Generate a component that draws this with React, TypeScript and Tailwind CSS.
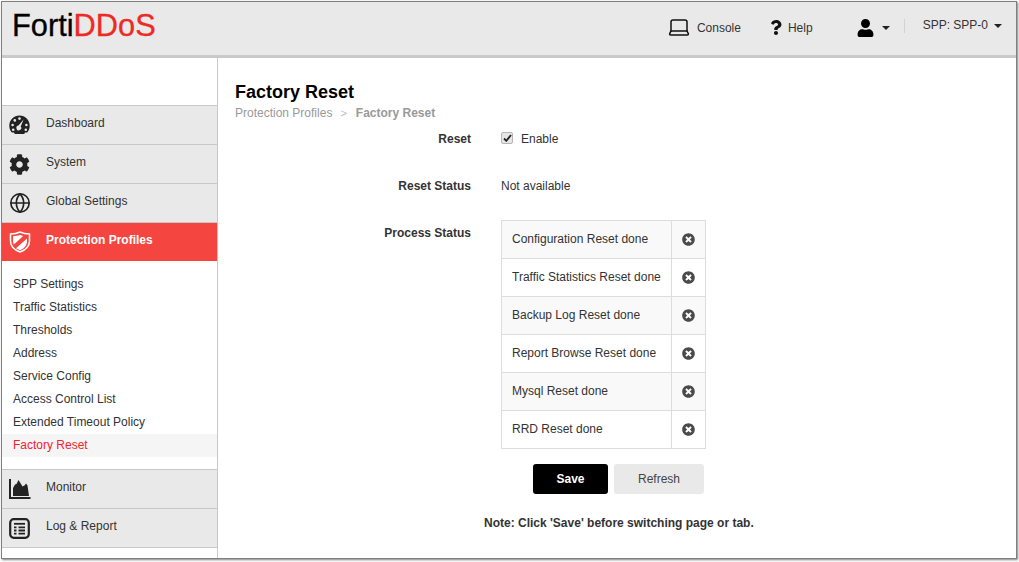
import { FaCog, FaQuestion, FaTimesCircle, FaUser } from 'react-icons/fa';
import { Globe, Laptop } from 'lucide-react';

const subItems = [
    'SPP Settings',
    'Traffic Statistics',
    'Thresholds',
    'Address',
    'Service Config',
    'Access Control List',
    'Extended Timeout Policy',
];

const processRows = [
    'Configuration Reset done',
    'Traffic Statistics Reset done',
    'Backup Log Reset done',
    'Report Browse Reset done',
    'Mysql Reset done',
    'RRD Reset done',
];

function Caret() {
    return <span className="inline-block w-0 h-0 border-x-[4px] border-x-transparent border-t-[4px] border-t-[#222]" />;
}

function GaugeIcon() {
    return (
        <svg width="21" height="20" viewBox="0 0 21 20">
            <path d="M10.500 0.500 C4.800 0.500 0.300 5 0.300 10.700 C0.300 13.300 1.200 15.600 2.800 17.400 L5 17.400 L5.800 19 L15.200 19 L16 17.400 L18.200 17.400 C19.800 15.600 20.700 13.300 20.700 10.700 C20.700 5 16.200 0.500 10.500 0.500 Z" fill="#222" />
            <g fill="#e9e9e9">
                <circle cx="10.500" cy="3.600" r="1.300" />
                <circle cx="5.800" cy="5.400" r="1.300" />
                <circle cx="3.600" cy="10" r="1.300" />
                <circle cx="4.200" cy="14.700" r="1.300" />
                <circle cx="17.400" cy="10" r="1.300" />
                <circle cx="16.800" cy="14.700" r="1.300" />
            </g>
            <path d="M14.700 4.300 L11.700 11.500 A2.400 2.400 0 1 1 9.500 10.600 Z" fill="#e9e9e9" />
        </svg>
    );
}

function ShieldIcon() {
    return (
        <svg width="22" height="22" viewBox="0 0 22 22">
            <path d="M11 1 C8 2.500 5 3 1.500 3 V10 C1.500 15 5.500 19 11 21 C16.500 19 20.500 15 20.500 10 V3 C17 3 14 2.500 11 1 Z" fill="none" stroke="#fff" strokeWidth="1.500" />
            <path d="M11 3.800 C8.800 4.800 6.800 5.200 4 5.300 V10 C4 11.300 4.300 12.400 4.900 13.500 L14.200 5 C13.100 4.700 12.100 4.300 11 3.800 Z" fill="#fff" />
            <path d="M18 7.500 L7 17.200 C8.200 18 9.500 18.700 11 19.200 C15 17.600 18 14.500 18 10 Z" fill="#fff" />
        </svg>
    );
}

function AreaIcon() {
    return (
        <svg width="22" height="20" viewBox="0 0 22 20">
            <path d="M1 0 V19 H21.500" fill="none" stroke="#222" strokeWidth="2" />
            <path d="M4 17 V9 L6 5.500 L7.500 5 L9.500 1 L12 5 L13.500 7.500 L15.500 6.500 L17 4.500 L18.500 6.500 L20 17 Z" fill="#222" />
        </svg>
    );
}

function ListIcon() {
    return (
        <svg width="21" height="21" viewBox="0 0 21 21">
            <rect x="1.200" y="1.200" width="18.600" height="18.600" rx="3.500" fill="none" stroke="#222" strokeWidth="2.200" />
            <path d="M5 5.800 H16" stroke="#222" strokeWidth="1.800" />
            <path d="M5 9.300 H7.500 M9.500 9.300 H16 M5 12.500 H7.500 M9.500 12.500 H16 M5 15.700 H7.500 M9.500 15.700 H16" stroke="#222" strokeWidth="1.800" />
        </svg>
    );
}

function NavItem({ icon, label, active }: { icon: React.ReactNode; label: string; active?: boolean }) {
    return (
        <div className={`flex h-[39px] items-center border-t border-[#c8c8c8] ${active ? 'bg-[#f44540] text-white font-bold' : 'bg-[#e9e9e9] text-[#333]'}`}>
            <div className="w-[44px] pl-[7px] flex items-center shrink-0">{icon}</div>
            <span className="-mt-[5px]">{label}</span>
        </div>
    );
}

export default function App() {
    return (
        <div className="w-[1019px] h-[562px] bg-white overflow-hidden pt-px pl-px font-['Liberation_Sans',Arial,sans-serif] text-[12px] text-[#333]">
            <div className="w-[1016px] h-[558px] border border-[#7f7f7f] shadow-[1px_1px_2px_rgba(0,0,0,0.5)] flex flex-col overflow-hidden">
                {/* Header */}
                <header className="h-[56px] shrink-0 bg-[#e9e9e9] border-b-[3px] border-[#c9c9c9] flex items-center">
                    <div className="ml-[10px] -mt-[4px] text-[30.800px] leading-none text-black [-webkit-text-stroke:0.3px]">
                        Forti<span className="text-[#ee2a24]">DDoS</span>
                    </div>
                    <div className="ml-auto flex items-center -mt-[1px]">
                        <Laptop className="w-[24px] h-[24px] text-[#111] -mt-[3px]" strokeWidth={1.500} />
                        <span className="ml-[6px]">Console</span>
                        <FaQuestion className="ml-[29px] w-[12px] h-[15px] text-[#111] -mt-[1px]" />
                        <span className="ml-[6px]">Help</span>
                        <FaUser className="ml-[44px] w-[17px] h-[18px] text-black -mt-[1px]" />
                        <span className="ml-[8px] flex"><Caret /></span>
                        <div className="ml-[14px] w-px h-[14px] bg-[#d2d2d2] -mt-[4px]" />
                        <span className="ml-[18px] -mt-[6px]">SPP: SPP-0</span>
                        <span className="ml-[6px] mr-[14px] -mt-[5px] flex"><Caret /></span>
                    </div>
                </header>

                <div className="flex-1 flex min-h-0">
                    {/* Sidebar */}
                    <aside className="w-[216px] shrink-0 border-r border-[#c8c8c8] flex flex-col">
                        <div className="h-[47px] shrink-0" />
                        <NavItem icon={<GaugeIcon />} label="Dashboard" />
                        <NavItem icon={<FaCog className="w-[21px] h-[21px] text-[#222]" />} label="System" />
                        <NavItem icon={<Globe className="w-[22px] h-[22px] text-[#222]" strokeWidth={1.800} />} label="Global Settings" />
                        <NavItem icon={<ShieldIcon />} label="Protection Profiles" active />
                        <ul className="pt-[11px] pb-[12px] shrink-0">
                            {subItems.map((item) => (
                                <li key={item} className="h-[23px] pl-[11px] flex items-center">{item}</li>
                            ))}
                            <li className="h-[23px] mt-px pb-[2px] pl-[11px] flex items-center bg-[#f5f5f5] text-[#f5222d]">Factory Reset</li>
                        </ul>
                        <NavItem icon={<AreaIcon />} label="Monitor" />
                        <NavItem icon={<ListIcon />} label="Log & Report" />
                        <div className="border-t border-[#c8c8c8]" />
                    </aside>

                    {/* Main */}
                    <main className="flex-1 pl-[17px] pt-[23px]">
                        <h1 className="text-[18px] leading-[22px] font-bold text-black">Factory Reset</h1>
                        <div className="flex items-center h-[16px] mt-[2px] text-[#999]">
                            <span>Protection Profiles</span>
                            <span className="ml-[8px] mr-[9px] text-[#bbb] text-[11px]">&gt;</span>
                            <span className="font-bold">Factory Reset</span>
                        </div>
                        <div className="grid grid-cols-[236px_1fr] gap-x-[30px] mt-[7px]">
                            <div className="h-[47px] text-right font-bold pt-[2px]">Reset</div>
                            <label className="flex items-start pt-[2px]">
                                <span className="w-[12px] h-[12px] mt-[2px] rounded-[2px] border border-[#b5b5b5] bg-[#e6e6e6] flex items-center justify-center">
                                    <svg width="9" height="8" viewBox="0 0 9 8">
                                        <path d="M1 4.500 L3.300 6.800 L8 1" fill="none" stroke="#222" strokeWidth="1.800" />
                                    </svg>
                                </span>
                                <span className="ml-[8px]">Enable</span>
                            </label>
                            <div className="h-[47px] text-right font-bold pt-[2px]">Reset Status</div>
                            <div className="pt-[2px]">Not available</div>
                            <div className="text-right font-bold pt-[2px]">Process Status</div>
                            <div className="-mt-[2px]">
                                <table className="border-collapse">
                                    <tbody>
                                        {processRows.map((row, i) => (
                                            <tr key={row} className={`h-[38px] ${i % 2 === 0 ? 'bg-[#f9f9f9]' : 'bg-white'}`}>
                                                <td className="w-[170px] border border-[#dddddd] pl-[10px] pb-[1px]">{row}</td>
                                                <td className="w-[34px] border border-[#dddddd]">
                                                    <FaTimesCircle className="mx-auto -mt-px w-[13px] h-[13px] text-[#4a4a4a]" />
                                                </td>
                                            </tr>
                                        ))}
                                    </tbody>
                                </table>
                                <div className="flex mt-[15px] ml-[32px] gap-[6px]">
                                    <button className="w-[75px] h-[30px] rounded-[3px] bg-black text-white font-bold">Save</button>
                                    <button className="w-[90px] h-[30px] rounded-[3px] bg-[#e9e9e9] text-[#444]">Refresh</button>
                                </div>
                            </div>
                        </div>
                        <p className="mt-[20px] ml-[249px] font-bold">Note: Click 'Save' before switching page or tab.</p>
                    </main>
                </div>
            </div>
        </div>
    );
}
